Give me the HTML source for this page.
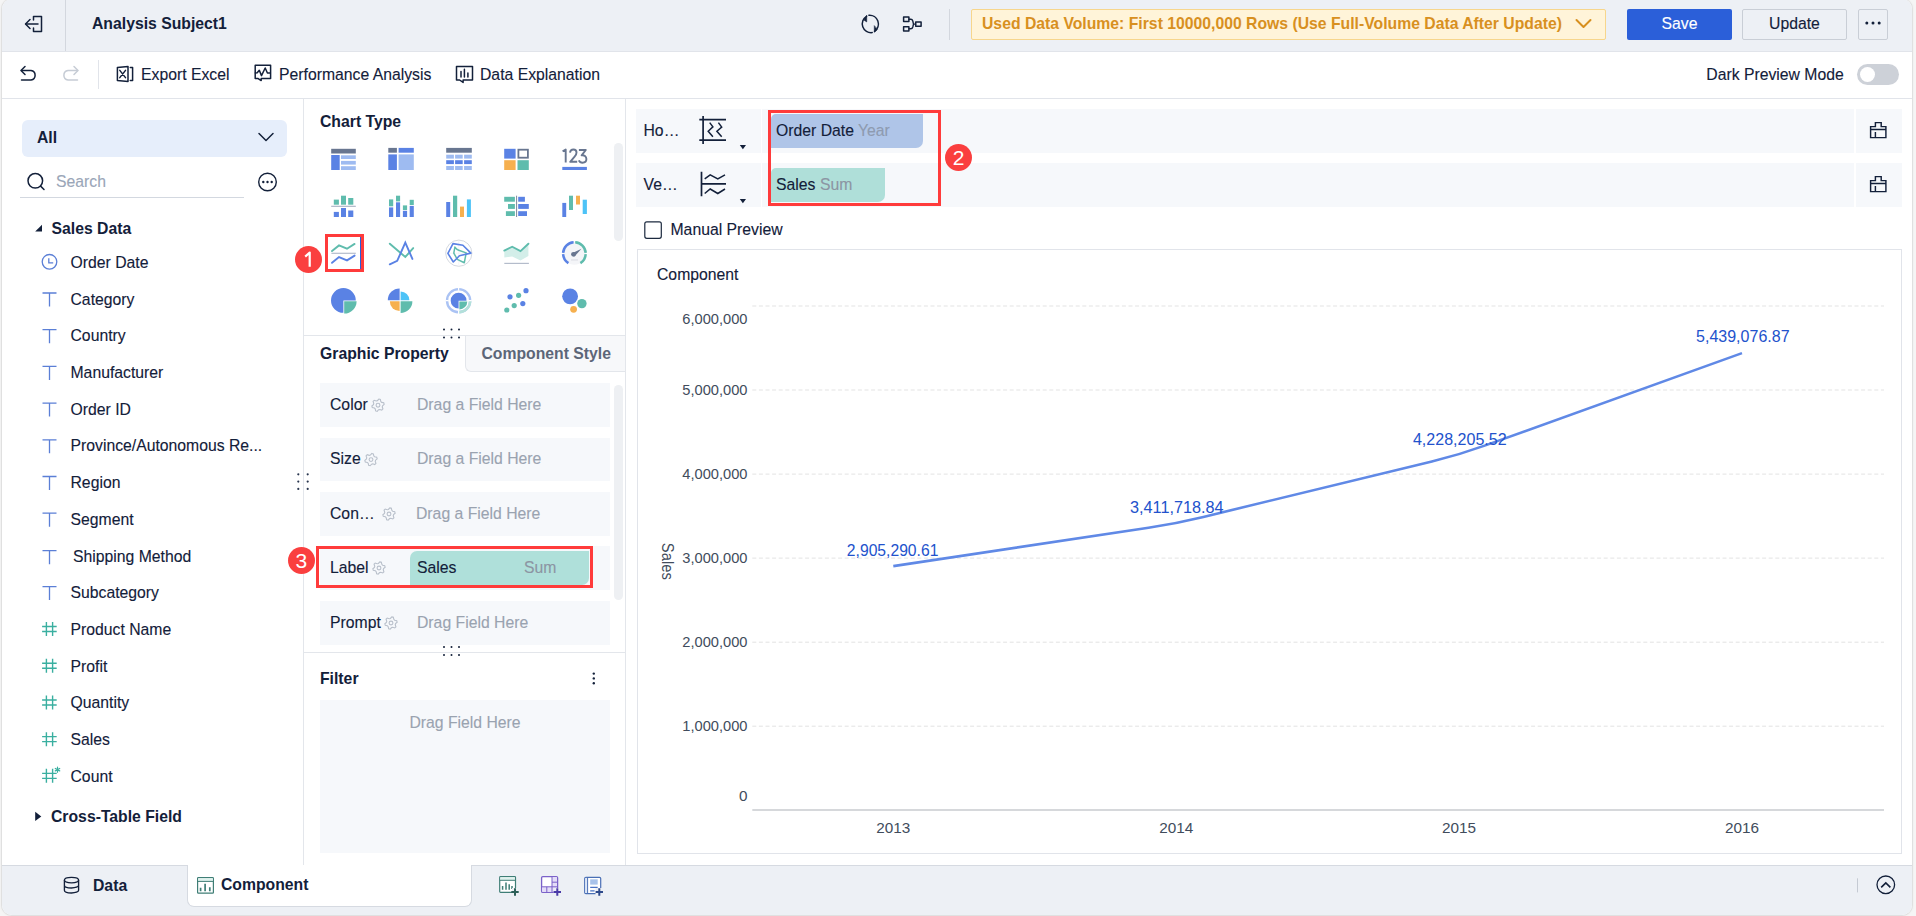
<!DOCTYPE html>
<html><head><meta charset="utf-8">
<style>
*{box-sizing:border-box;margin:0;padding:0}
html,body{width:1916px;height:916px;overflow:hidden;background:#f5f5f5;font-family:"Liberation Sans",sans-serif;color:#1c2a3f}
.a{position:absolute}
#frame{position:absolute;left:1px;top:-2px;width:1912px;height:918px;border:1px solid #e0e0e0;border-radius:11px;overflow:hidden;background:#fff;box-shadow:0 0 2px rgba(0,0,0,0.06)}
.t{position:absolute;font-size:15.75px;line-height:18px;white-space:nowrap;-webkit-text-stroke:0.12px currentColor}
.b{font-weight:bold;-webkit-text-stroke:0}
svg{position:absolute;overflow:visible}
.ic{fill:none;stroke:#13203a;stroke-width:1.5;stroke-linecap:round;stroke-linejoin:round}
</style></head><body>
<div id="frame"><div class="a" style="left:-2px;top:1px;width:1912px;height:916px">
<!-- ============ TOP BAR ============ -->
<div class="a" style="left:0;top:0;width:1912px;height:52px;background:#edf0f5;border-bottom:1px solid #e1e4ea"></div>
<div class="a" style="left:65px;top:0;width:1px;height:51px;background:#d3d7de"></div>
<svg style="left:0;top:0" width="66" height="51"><g class="ic" stroke-width="1.6"><path d="M26 24 H38"/><path d="M30 19.5 L25.5 24 L30 28.5"/><path d="M33.5 20 V16.5 H41.5 V31.5 H33.5 V28"/></g></svg>
<div class="t b" style="left:92px;top:15px;color:#13203a">Analysis Subject1</div>
<svg style="left:0;top:0" width="960" height="51"><g class="ic" stroke-width="1.6">
 <path d="M868.9 15.3 A8.8 8.8 0 0 1 874.6 31.3"/><path d="M872.2 32.6 A8.8 8.8 0 0 1 866.6 16.3"/>
 <path d="M866.7 15.6 L866.7 21.9 L863.9 20 Z" fill="#13203a" stroke-width="0.6"/><path d="M874.3 26 L874.3 32.3 L877.2 29.5 Z" fill="#13203a" stroke-width="0.6"/>
 <rect x="903.6" y="17.1" width="5.3" height="4.3" stroke-width="1.5"/><rect x="903.6" y="26.7" width="5.3" height="4.3" stroke-width="1.5"/><rect x="915.7" y="21.9" width="5.4" height="4.4" stroke-width="1.5"/>
 <path d="M909 19.3 H910.8 Q912.3 19.3 912.8 21 L913.5 24.1 L912.8 27 Q912.3 28.8 910.8 28.8 H909 M913.5 24.1 H915.7" stroke-width="1.4"/>
</g></svg>
<div class="a" style="left:949px;top:9px;width:1px;height:31px;background:#d3d7de"></div>
<div class="a" style="left:971px;top:9px;width:635px;height:31px;background:#fff4d9;border:1px solid #f7d68c;border-radius:2px"></div>
<div class="t b" style="left:982px;top:15px;color:#d8901f">Used Data Volume: First 10000,000 Rows (Use Full-Volume Data After Update)</div>
<svg style="left:0;top:0" width="1600" height="51"><path d="M1576.5 20 L1583.5 27 L1590.5 20" fill="none" stroke="#d8901f" stroke-width="2" stroke-linecap="round" stroke-linejoin="round"/></svg>
<div class="a" style="left:1627px;top:9px;width:105px;height:31px;background:#2b5fd9;border-radius:2px"></div>
<div class="t" style="left:1627px;top:15px;width:105px;text-align:center;color:#fff">Save</div>
<div class="a" style="left:1742px;top:9px;width:105px;height:31px;border:1px solid #c9ced6;border-radius:2px"></div>
<div class="t" style="left:1742px;top:15px;width:105px;text-align:center;color:#13203a">Update</div>
<div class="a" style="left:1858px;top:9px;width:30px;height:31px;border:1px solid #c9ced6;border-radius:2px"></div>
<svg style="left:0;top:0" width="1900" height="51"><g fill="#13203a"><circle cx="1866.8" cy="23" r="1.5"/><circle cx="1873" cy="23" r="1.5"/><circle cx="1879.2" cy="23" r="1.5"/></g></svg>

<!-- ============ TOOLBAR ============ -->
<div class="a" style="left:0;top:98px;width:1912px;height:1px;background:#e1e4ea"></div>
<svg style="left:0;top:52px" width="620" height="46"><g class="ic" stroke-width="1.6">
 <path d="M25 14.5 L21 18.5 L25 22.5"/><path d="M21.5 18.5 H31 A4.8 4.8 0 0 1 31 28 H21.5"/>
 <g stroke="#c6ccd5"><path d="M74 14.5 L78 18.5 L74 22.5"/><path d="M77.5 18.5 H68 A4.8 4.8 0 0 0 68 28 H77.5"/></g>
</g></svg>
<div class="a" style="left:98px;top:60px;width:1px;height:29px;background:#e1e4ea"></div>
<svg style="left:0;top:0" width="620" height="98"><g class="ic" stroke-width="1.3" stroke-linecap="butt" stroke-linejoin="miter">
 <path d="M117.4 67.4 L128 66.4 V81.6 L117.4 80.6 Z"/><path d="M119.8 70.4 L125.5 77.6 M125.5 70.4 L119.8 77.6"/><path d="M130.3 67.4 H132.6 V80.6 H130.3"/>
 <path d="M255.2 65.3 H270.6 V78.4 H261.2 V80.6 L257.8 78.4 H255.2 Z"/><path d="M255.4 73 L257.2 72.8 L259.3 70.3 L261.5 75.6 L265.2 68 L267.4 73 L270 73"/>
 <path d="M456.5 66.5 H472.5 V80 H463.1 V82.4 L459.6 80 H456.5 Z"/><path d="M461 71.5 V76.9 M464.4 69.2 V76.9 M467.9 73.1 V76.9" stroke-width="1.5"/>
</g></svg>
<div class="t" style="left:141px;top:66px;color:#13203a">Export Excel</div>
<div class="t" style="left:279px;top:66px;color:#13203a">Performance Analysis</div>
<div class="t" style="left:480px;top:66px;color:#13203a">Data Explanation</div>
<div class="t" style="left:1706.3px;top:66px;color:#13203a">Dark Preview Mode</div>
<div class="a" style="left:1857px;top:64px;width:42px;height:21px;border-radius:11px;background:#cdd1d8"></div>
<div class="a" style="left:1860px;top:67px;width:15px;height:15px;border-radius:50%;background:#fff"></div>
<!-- ============ LEFT PANEL ============ -->
<div class="a" style="left:303px;top:99px;width:1px;height:766px;background:#e3e6eb"></div>
<div class="a" style="left:22px;top:120px;width:265px;height:37px;background:#e6eefb;border-radius:6px"></div>
<div class="t b" style="left:37px;top:129px;color:#13203a">All</div>
<svg style="left:0;top:0" width="300" height="860"><path d="M259 133.5 L266 140.5 L273 133.5" fill="none" stroke="#13203a" stroke-width="1.5" stroke-linecap="round" stroke-linejoin="round"/>
<g class="ic" stroke-width="1.6"><circle cx="35.3" cy="180.8" r="7.3"/><path d="M40.6 186.1 L44 189.5"/><circle cx="267.5" cy="182" r="8.8" stroke-width="1.4"/></g>
<g fill="#13203a"><circle cx="263.3" cy="182" r="1.2"/><circle cx="267.5" cy="182" r="1.2"/><circle cx="271.7" cy="182" r="1.2"/></g>
<path d="M42 224.8 L42 231.6 L35.2 231.6 Z" fill="#13203a"/>
<path d="M35.2 811.8 L41.3 816.4 L35.2 821 Z" fill="#13203a"/>

<g fill="none" stroke="#5b7fd6" stroke-width="1.3"><circle cx="49.5" cy="261.8" r="7.3"/><path d="M48.8 258.3 V262.8 H53.2"/></g>
<g fill="none" stroke="#5b7fd6" stroke-width="1.3"><path d="M42.5 293.0 H56.5 M49.5 293.0 V306.5"/></g>
<g fill="none" stroke="#5b7fd6" stroke-width="1.3"><path d="M42.5 329.7 H56.5 M49.5 329.7 V343.2"/></g>
<g fill="none" stroke="#5b7fd6" stroke-width="1.3"><path d="M42.5 366.4 H56.5 M49.5 366.4 V379.9"/></g>
<g fill="none" stroke="#5b7fd6" stroke-width="1.3"><path d="M42.5 403.1 H56.5 M49.5 403.1 V416.6"/></g>
<g fill="none" stroke="#5b7fd6" stroke-width="1.3"><path d="M42.5 439.8 H56.5 M49.5 439.8 V453.3"/></g>
<g fill="none" stroke="#5b7fd6" stroke-width="1.3"><path d="M42.5 476.5 H56.5 M49.5 476.5 V490.0"/></g>
<g fill="none" stroke="#5b7fd6" stroke-width="1.3"><path d="M42.5 513.2 H56.5 M49.5 513.2 V526.7"/></g>
<g fill="none" stroke="#5b7fd6" stroke-width="1.3"><path d="M42.5 550.7 H56.5 M49.5 550.7 V564.2"/></g>
<g fill="none" stroke="#5b7fd6" stroke-width="1.3"><path d="M42.5 586.6 H56.5 M49.5 586.6 V600.1"/></g>
<g fill="none" stroke="#3aafa0" stroke-width="1.4"><path d="M42.1 626.55 H56.7 M42.1 631.55 H56.7 M46.4 622.05 V636.05 M52.6 622.05 V636.05"/></g>
<g fill="none" stroke="#3aafa0" stroke-width="1.4"><path d="M42.1 663.25 H56.7 M42.1 668.25 H56.7 M46.4 658.75 V672.75 M52.6 658.75 V672.75"/></g>
<g fill="none" stroke="#3aafa0" stroke-width="1.4"><path d="M42.1 699.95 H56.7 M42.1 704.95 H56.7 M46.4 695.45 V709.45 M52.6 695.45 V709.45"/></g>
<g fill="none" stroke="#3aafa0" stroke-width="1.4"><path d="M42.1 736.65 H56.7 M42.1 741.65 H56.7 M46.4 732.15 V746.15 M52.6 732.15 V746.15"/></g>
<g fill="none" stroke="#3aafa0" stroke-width="1.4"><path d="M42.1 773.35 H56.7 M42.1 778.35 H56.7 M46.4 768.85 V782.85 M52.6 768.85 V782.85"/></g>
<g stroke="#3aafa0" stroke-width="1.2" stroke-linecap="round"><path d="M57.5 767.15 V772.15 M55.3 768.45 L59.7 770.85 M59.7 768.45 L55.3 770.85"/></g>
</svg>
<div class="t" style="left:56px;top:173px;color:#9aa6b8">Search</div>
<div class="a" style="left:20px;top:197px;width:224px;height:1px;background:#d3d8e0"></div>
<div class="t b" style="left:51.5px;top:220px;color:#13203a">Sales Data</div>
<div class="t" style="left:70.5px;top:253.80px;color:#13203a">Order Date</div>
<div class="t" style="left:70.5px;top:290.50px;color:#13203a">Category</div>
<div class="t" style="left:70.5px;top:327.20px;color:#13203a">Country</div>
<div class="t" style="left:70.5px;top:363.90px;color:#13203a">Manufacturer</div>
<div class="t" style="left:70.5px;top:400.60px;color:#13203a">Order ID</div>
<div class="t" style="left:70.5px;top:437.30px;color:#13203a">Province/Autonomous Re...</div>
<div class="t" style="left:70.5px;top:474.00px;color:#13203a">Region</div>
<div class="t" style="left:70.5px;top:510.70px;color:#13203a">Segment</div>
<div class="t" style="left:73px;top:548.20px;color:#13203a">Shipping Method</div>
<div class="t" style="left:70.5px;top:584.10px;color:#13203a">Subcategory</div>
<div class="t" style="left:70.5px;top:620.80px;color:#13203a">Product Name</div>
<div class="t" style="left:70.5px;top:657.50px;color:#13203a">Profit</div>
<div class="t" style="left:70.5px;top:694.20px;color:#13203a">Quantity</div>
<div class="t" style="left:70.5px;top:730.90px;color:#13203a">Sales</div>
<div class="t" style="left:70.5px;top:767.60px;color:#13203a">Count</div>
<div class="t b" style="left:51px;top:807.7px;color:#13203a">Cross-Table Field</div>
<svg style="left:0;top:0" width="310" height="500"><g fill="#2a3750"><circle cx="298.3" cy="474.3" r="1.1"/><circle cx="298.3" cy="481.6" r="1.1"/><circle cx="298.3" cy="488.9" r="1.1"/><circle cx="307.7" cy="474.3" r="1.1"/><circle cx="307.7" cy="481.6" r="1.1"/><circle cx="307.7" cy="488.9" r="1.1"/></g></svg>
<!-- ============ RIGHT PANEL ============ -->
<div class="a" style="left:636px;top:109.3px;width:1218px;height:43.3px;background:#f6f8fb"></div>
<div class="a" style="left:1855.5px;top:109.3px;width:46.5px;height:43.3px;background:#f6f8fb"></div>
<div class="a" style="left:760.5px;top:109.3px;width:1px;height:43.3px;background:#fff"></div>
<div class="a" style="left:636px;top:163.3px;width:1218px;height:43.3px;background:#f6f8fb"></div>
<div class="a" style="left:1855.5px;top:163.3px;width:46.5px;height:43.3px;background:#f6f8fb"></div>
<div class="a" style="left:760.5px;top:163.3px;width:1px;height:43.3px;background:#fff"></div>
<div class="t" style="left:643.5px;top:121.5px;color:#13203a">Ho…</div>
<div class="t" style="left:643.5px;top:175.5px;color:#13203a">Ve…</div>
<svg style="left:0;top:0" width="1916" height="260"><g fill="none" stroke="#13203a" stroke-width="1.7" stroke-linecap="butt"><path d="M703.1 116 V144 M699.3 119.6 H726 M699.3 140.2 H726"/><path d="M709.7 122.6 L712.9 126.9 L708.2 131.3 L712.9 136.8 M718.4 122.6 L721.7 127.1 L716.9 131.3 L721.7 136.8" stroke-width="1.5" stroke-linejoin="miter"/><path d="M701.5 171.7 V196.3 M701.5 183.9 H726" /><path d="M704.7 178.8 L710.2 174.8 L717.8 178.8 L725 174.8 M704.7 193.5 L710.2 189 L717.8 193.5 L725 189" stroke-width="1.5"/></g><path d="M739.8 145 H746 L742.9 149.2 Z M739.8 199 H746 L742.9 203.2 Z" fill="#13203a"/><g transform="translate(0,0)" fill="none" stroke="#13203a" stroke-width="1.45" stroke-linejoin="miter"><path d="M1870.6 126.6 H1875.4 V122.6 H1881.2 V126.6 H1885.9 V137.6 H1870.6 Z M1870.6 129.5 H1885.9 M1875.4 132 V137.6"/></g><g transform="translate(0,54)" fill="none" stroke="#13203a" stroke-width="1.45" stroke-linejoin="miter"><path d="M1870.6 126.6 H1875.4 V122.6 H1881.2 V126.6 H1885.9 V137.6 H1870.6 Z M1870.6 129.5 H1885.9 M1875.4 132 V137.6"/></g><rect x="644.8" y="221.8" width="16.5" height="16.5" rx="2" fill="#fff" stroke="#1c2a3f" stroke-width="1.2"/></svg>
<div class="a" style="left:770.5px;top:114.2px;width:152.5px;height:33.8px;background:#afc5e8;border-radius:5px 0 7px 0"></div>
<div class="t" style="left:776px;top:121.5px;color:#13203a">Order Date</div>
<div class="t" style="left:858px;top:121.5px;color:#8e9bb0">Year</div>
<div class="a" style="left:770.5px;top:168px;width:114.5px;height:33.8px;background:#afdfd9;border-radius:5px 0 7px 0"></div>
<div class="t" style="left:776px;top:175.5px;color:#13203a">Sales</div>
<div class="t" style="left:820px;top:175.5px;color:#8c95a3">Sum</div>
<div class="a" style="left:768px;top:110.2px;width:173px;height:95.6px;border:3.1px solid #ff3b3b"></div>
<div class="t" style="left:670.5px;top:220.5px;color:#13203a">Manual Preview</div>
<div class="a" style="left:636.5px;top:249px;width:1265.5px;height:604.5px;border:1px solid #e1e4ea"></div>
<div class="t" style="left:657px;top:266px;color:#13203a">Component</div>
<svg style="left:0;top:0" width="1916" height="860"><path d="M752.3 726.2 H1884" stroke="#e3e3e3" stroke-width="1" stroke-dasharray="4 2.6"/><path d="M752.3 642.2 H1884" stroke="#e3e3e3" stroke-width="1" stroke-dasharray="4 2.6"/><path d="M752.3 558.1 H1884" stroke="#e3e3e3" stroke-width="1" stroke-dasharray="4 2.6"/><path d="M752.3 474.1 H1884" stroke="#e3e3e3" stroke-width="1" stroke-dasharray="4 2.6"/><path d="M752.3 390.0 H1884" stroke="#e3e3e3" stroke-width="1" stroke-dasharray="4 2.6"/><path d="M752.3 306.0 H1884" stroke="#e3e3e3" stroke-width="1" stroke-dasharray="4 2.6"/><path d="M752.3 810 H1884" stroke="#c9cbcf" stroke-width="1.3"/><text x="747.5" y="800.7" text-anchor="end" font-family="Liberation Sans" font-size="15.3" fill="#414c5c">0</text><text x="747.5" y="731.4" text-anchor="end" font-family="Liberation Sans" font-size="15.3" fill="#414c5c" textLength="65.2" lengthAdjust="spacingAndGlyphs">1,000,000</text><text x="747.5" y="647.4" text-anchor="end" font-family="Liberation Sans" font-size="15.3" fill="#414c5c" textLength="65.2" lengthAdjust="spacingAndGlyphs">2,000,000</text><text x="747.5" y="563.3" text-anchor="end" font-family="Liberation Sans" font-size="15.3" fill="#414c5c" textLength="65.2" lengthAdjust="spacingAndGlyphs">3,000,000</text><text x="747.5" y="479.3" text-anchor="end" font-family="Liberation Sans" font-size="15.3" fill="#414c5c" textLength="65.2" lengthAdjust="spacingAndGlyphs">4,000,000</text><text x="747.5" y="395.2" text-anchor="end" font-family="Liberation Sans" font-size="15.3" fill="#414c5c" textLength="65.2" lengthAdjust="spacingAndGlyphs">5,000,000</text><text x="747.5" y="323.7" text-anchor="end" font-family="Liberation Sans" font-size="15.3" fill="#414c5c" textLength="65.2" lengthAdjust="spacingAndGlyphs">6,000,000</text><text x="893.3" y="833.2" text-anchor="middle" font-family="Liberation Sans" font-size="15.3" fill="#414c5c">2013</text><text x="1176.2" y="833.2" text-anchor="middle" font-family="Liberation Sans" font-size="15.3" fill="#414c5c">2014</text><text x="1459.1" y="833.2" text-anchor="middle" font-family="Liberation Sans" font-size="15.3" fill="#414c5c">2015</text><text x="1742.0" y="833.2" text-anchor="middle" font-family="Liberation Sans" font-size="15.3" fill="#414c5c">2016</text><text transform="translate(662.2,561.3) rotate(90)" text-anchor="middle" font-family="Liberation Sans" font-size="17" fill="#414c5c" textLength="37" lengthAdjust="spacingAndGlyphs">Sales</text><path d="M893.3 566.1 L1148.5 527.7 Q1176.2 523.5 1203.4 516.9 L1431.9 461.5 Q1459.1 454.9 1485.4 445.4 L1742 353.1" fill="none" stroke="#6089e6" stroke-width="2.6" stroke-linecap="butt"/><text x="892.6" y="556.4" text-anchor="middle" font-family="Liberation Sans" font-size="16.6" fill="#2252cc" textLength="91.5" lengthAdjust="spacingAndGlyphs">2,905,290.61</text><text x="1176.8" y="513.4" text-anchor="middle" font-family="Liberation Sans" font-size="16.6" fill="#2252cc" textLength="93.5" lengthAdjust="spacingAndGlyphs">3,411,718.84</text><text x="1459.8" y="445.2" text-anchor="middle" font-family="Liberation Sans" font-size="16.6" fill="#2252cc" textLength="93.7" lengthAdjust="spacingAndGlyphs">4,228,205.52</text><text x="1742.8" y="342.4" text-anchor="middle" font-family="Liberation Sans" font-size="16.6" fill="#2252cc" textLength="93.5" lengthAdjust="spacingAndGlyphs">5,439,076.87</text></svg>
<!-- ============ BOTTOM BAR ============ -->
<div class="a" style="left:0;top:865px;width:1912px;height:52px;background:#edf0f5;border-top:1px solid #d6dae1"></div>
<div class="a" style="left:186.5px;top:865px;width:285px;height:41.5px;background:#fff;border:1px solid #d6dae1;border-top:none;border-radius:0 0 7px 7px"></div>
<div class="t b" style="left:93px;top:876.5px;color:#13203a">Data</div>
<div class="t b" style="left:221px;top:876px;color:#13203a">Component</div>
<svg style="left:0;top:0" width="1916" height="916"><g fill="none" stroke="#13203a" stroke-width="1.35"><ellipse cx="71.5" cy="880.1" rx="7.1" ry="2.7"/><path d="M64.4 880.1 V890.3 A7.1 2.7 0 0 0 78.6 890.3 V880.1 M64.4 885.3 A7.1 2.7 0 0 0 78.6 885.3"/></g><rect x="197.6" y="877.6" width="15.8" height="15.6" rx="0.8" fill="#fff" stroke="#3f7e76" stroke-width="1.2"/><rect x="198.2" y="878.2" width="14.6" height="3" fill="#dff2ee"/><path d="M197.6 881.4 H213.4" stroke="#3f7e76" stroke-width="1"/><path d="M200.6 887.8 V891.3 M205.1 883.8 V891.3 M209.8 887.3 V891.3" stroke="#3f7e76" stroke-width="1.7"/><rect x="499.7" y="876.6" width="15.8" height="15.8" rx="0.8" fill="#fff" stroke="#3f7e76" stroke-width="1.2"/><rect x="500.3" y="877.2" width="14.6" height="2.8" fill="#dff2ee"/><path d="M499.7 880.3 H515.5" stroke="#3f7e76" stroke-width="1"/><path d="M502.6 886 V889.8 M506 882.6 V889.8 M509.2 884.3 V889.8 M512 886 V889" stroke="#3f7e76" stroke-width="1.5"/><rect x="512" y="888" width="8" height="8" fill="#edf0f5"/><path d="M515 888.3 V895.7 M511.3 892 H518.7" stroke="#2d5f58" stroke-width="2"/><rect x="541.6" y="876.6" width="16" height="15.8" rx="1.2" fill="#fff" stroke="#7b62c9" stroke-width="1.3"/><rect x="552" y="877.2" width="5" height="9.6" fill="#e4ddf8"/><rect x="542.2" y="886.8" width="14.8" height="5" fill="#e4ddf8"/><path d="M552 876.6 V892.4 M541.6 886.8 H557.6 M552 882.2 H557.6 M546.8 886.8 V892.4" stroke="#7b62c9" stroke-width="1"/><rect x="553.5" y="888" width="8" height="8" fill="#edf0f5"/><path d="M557.3 888.3 V895.7 M553.6 892 H561" stroke="#4a3aa7" stroke-width="2"/><rect x="584.7" y="877.3" width="16" height="16.3" rx="1.2" fill="#fff" stroke="#4a6fb5" stroke-width="1.2"/><rect x="585.3" y="877.9" width="2.2" height="15.1" fill="#dbe6f7"/><path d="M587.6 877.3 V893.6" stroke="#4a6fb5" stroke-width="1"/><rect x="590.2" y="879.3" width="7.5" height="5.3" fill="#a9c3ea"/><path d="M590.2 887.4 H597.7 M590.2 890.9 H594.6" stroke="#4a73c4" stroke-width="1.2"/><rect x="595.5" y="888" width="8" height="8" fill="#edf0f5"/><path d="M599.3 888.3 V895.7 M595.6 892 H603" stroke="#2e4a8b" stroke-width="2"/><path d="M1857.5 878.3 V892.4" stroke="#c5cad3" stroke-width="1"/><g fill="none" stroke="#13203a" stroke-width="1.3"><circle cx="1885.8" cy="884.8" r="8.8"/><path d="M1881.2 887.4 L1885.8 882.9 L1890.4 887.4" stroke-width="1.6"/></g></svg>
<!-- ============ MIDDLE PANEL ============ -->
<div class="a" style="left:625px;top:99px;width:1px;height:766px;background:#e3e6eb"></div>
<div class="t b" style="left:320px;top:113px;color:#13203a">Chart Type</div>
<div class="a" style="left:614px;top:143px;width:9px;height:98px;background:#eef0f3;border-radius:5px"></div>
<div class="a" style="left:325px;top:234px;width:39px;height:38px;border:3px solid #ff3b3b"></div>
<div class="a" style="left:360px;top:237px;width:1px;height:32px;background:#2b5fd9"></div>
<svg style="left:0;top:0" width="620" height="330"><rect x="331.2" y="148.8" width="24.60" height="4.70" fill="#687690"/>
<rect x="331.2" y="155" width="8.50" height="15.00" fill="#5a82e4"/>
<rect x="341" y="155.3" width="14.80" height="3.70" fill="#9ebbf1"/>
<rect x="341" y="160.9" width="14.80" height="3.70" fill="#9ebbf1"/>
<rect x="341" y="166.2" width="14.80" height="3.80" fill="#9ebbf1"/>
<rect x="388.3" y="147.9" width="8.60" height="4.80" fill="#687690"/>
<rect x="398.6" y="147.9" width="15.20" height="4.80" fill="#5a82e4"/>
<rect x="388.3" y="154.4" width="8.60" height="15.60" fill="#5a82e4"/>
<rect x="398.6" y="154.4" width="15.20" height="15.60" fill="#9ebbf1"/>
<rect x="446.2" y="147.9" width="25.60" height="4.80" fill="#687690"/>
<rect x="446.2" y="154.7" width="7.70" height="3.90" fill="#9ebbf1"/>
<rect x="455.1" y="154.7" width="7.60" height="3.90" fill="#9ebbf1"/>
<rect x="464.1" y="154.7" width="7.70" height="3.90" fill="#9ebbf1"/>
<rect x="446.2" y="160.2" width="7.70" height="3.90" fill="#5a82e4"/>
<rect x="455.1" y="160.2" width="7.60" height="3.90" fill="#5a82e4"/>
<rect x="464.1" y="160.2" width="7.70" height="3.90" fill="#5a82e4"/>
<rect x="446.2" y="166" width="7.70" height="4.00" fill="#9ebbf1"/>
<rect x="455.1" y="166" width="7.60" height="4.00" fill="#9ebbf1"/>
<rect x="464.1" y="166" width="7.70" height="4.00" fill="#9ebbf1"/>
<rect x="504.2" y="148.8" width="11.40" height="9.80" fill="#5a82e4"/>
<rect x="518.4" y="149.7" width="9.5" height="8" fill="none" stroke="#687690" stroke-width="1.8"/>
<rect x="504.2" y="160.2" width="11.40" height="9.80" fill="#f6b04f"/>
<rect x="517.5" y="160.2" width="11.30" height="9.80" fill="#5fbcad"/>
<path d="M562.6 151.4 L565.7 149.6 V162.6 M570 152.7 Q570.4 149.5 573.4 149.5 Q576.5 149.5 576.5 152.5 Q576.5 154.6 574.6 156.7 L570.2 161.8 H577.2 M578.9 150 H585.8 L581.6 155.3 Q583.6 155 585 156 Q586.4 157.1 586.4 159 Q586.4 162.7 582.5 162.7 Q579.9 162.7 578.8 160.4" fill="none" stroke="#687690" stroke-width="1.9" stroke-linejoin="round"/>
<rect x="562.3" y="166.9" width="24.60" height="3.10" fill="#5a82e4"/>
<rect x="331.2" y="205.7" width="24.60" height="1.30" fill="#b4bccb"/>
<rect x="333.8" y="199.6" width="5.10" height="5.10" fill="#5fbcad"/>
<rect x="341" y="195.7" width="5.00" height="9.00" fill="#5fbcad"/>
<rect x="348.2" y="198" width="5.10" height="6.70" fill="#5fbcad"/>
<rect x="333.8" y="211.9" width="5.10" height="5.10" fill="#5a82e4"/>
<rect x="341" y="208" width="5.00" height="9.00" fill="#5a82e4"/>
<rect x="348.2" y="210.5" width="5.10" height="6.50" fill="#5a82e4"/>
<rect x="389" y="199.4" width="4.20" height="6.90" fill="#5fbcad"/>
<rect x="389" y="207.4" width="4.20" height="9.60" fill="#5a82e4"/>
<rect x="396" y="195.7" width="4.10" height="5.70" fill="#5fbcad"/>
<rect x="396" y="202.3" width="4.10" height="14.70" fill="#5a82e4"/>
<rect x="402.9" y="205.4" width="4.20" height="4.60" fill="#5fbcad"/>
<rect x="402.9" y="210.8" width="4.20" height="6.20" fill="#5a82e4"/>
<rect x="409.7" y="199.8" width="4.10" height="5.20" fill="#5fbcad"/>
<rect x="409.7" y="205.9" width="4.10" height="11.10" fill="#5a82e4"/>
<rect x="446.2" y="202" width="4.00" height="15.00" fill="#5a82e4"/>
<rect x="453" y="195.7" width="4.20" height="21.30" fill="#5fbcad"/>
<rect x="460" y="206.6" width="4.00" height="10.40" fill="#f6b04f"/>
<rect x="466.9" y="199.4" width="4.00" height="17.60" fill="#4dc3f7"/>
<rect x="516" y="195.7" width="1.10" height="21.30" fill="#8a93a3"/>
<rect x="504.2" y="196.8" width="10.70" height="4.90" fill="#5fbcad"/>
<rect x="508" y="204" width="6.90" height="4.90" fill="#5fbcad"/>
<rect x="505.9" y="211.2" width="9.00" height="4.80" fill="#5fbcad"/>
<rect x="518.2" y="196.8" width="6.70" height="4.90" fill="#5a82e4"/>
<rect x="518.2" y="204" width="10.60" height="4.90" fill="#5a82e4"/>
<rect x="518.2" y="211.2" width="8.80" height="4.80" fill="#5a82e4"/>
<rect x="562.3" y="202.9" width="3.90" height="14.10" fill="#5a82e4"/>
<rect x="569" y="195.7" width="4.00" height="14.30" fill="#5fbcad"/>
<rect x="576" y="195.7" width="4.00" height="8.80" fill="#f6b04f"/>
<rect x="582.7" y="199.7" width="4.20" height="14.30" fill="#4dc3f7"/>
<polyline points="332,251.1 339,245.4 347,248.7 354.6,243.9" fill="none" stroke="#5fbcad" stroke-width="1.9" stroke-linecap="round" stroke-linejoin="miter"/>
<rect x="331.4" y="252.7" width="24.40" height="1.20" fill="#b4bccb"/>
<polyline points="332,262.8 339,257.1 347,260.4 354.6,255.6" fill="none" stroke="#5a82e4" stroke-width="1.9" stroke-linecap="round" stroke-linejoin="miter"/>
<polyline points="389.8,243.7 405.3,257 413.2,248.1" fill="none" stroke="#5fbcad" stroke-width="1.9" stroke-linecap="round"/>
<polyline points="389.8,264.3 397.2,260.9 405.3,242.7 412.4,258.9" fill="none" stroke="#5a82e4" stroke-width="1.9" stroke-linecap="round"/>
<circle cx="458.8" cy="253.2" r="13.1" fill="none" stroke="#d5d9e0" stroke-width="1"/>
<path d="M458.8 241 V265 M446.6 253.2 H471" stroke="#eceef2" stroke-width="0.6"/>
<path d="M454.9 247.1 Q456.5 249.5 458.7 250.3 L466.2 252.9 L464.3 262.7 L457.3 259.4 L453.8 253.1 Z" fill="none" stroke="#5fbcad" stroke-width="1.5" stroke-linejoin="round"/>
<polygon points="453,243.6 462.9,245.2 470.9,253.1 459.4,255.7 453.3,262 447.9,253.4" fill="none" stroke="#5a82e4" stroke-width="1.6" stroke-linejoin="round"/>
<polygon points="504.3,250.6 512.2,246.7 520.5,251.1 528.4,243.7 528.4,256 520.5,260.4 512.2,256.5 504.3,257.5" fill="#d3eee9"/>
<polyline points="504.3,250.6 512.2,246.7 520.5,251.1 528.4,243.7" fill="none" stroke="#5fbcad" stroke-width="1.9" stroke-linecap="round"/>
<rect x="504.3" y="262.8" width="24.60" height="1.20" fill="#b4bccb"/>
<circle cx="574.4" cy="253.5" r="11.3" fill="#f4f5f8"/>
<path d="M568.41 263.08 A11.3 11.3 0 0 1 563.12 254.09" fill="none" stroke="#5a82e4" stroke-width="2.5"/>
<path d="M563.12 252.91 A11.3 11.3 0 0 1 573.61 242.23" fill="none" stroke="#5a82e4" stroke-width="2.5"/>
<path d="M575.19 242.23 A11.3 11.3 0 0 1 585.68 252.91" fill="none" stroke="#5fbcad" stroke-width="2.5"/>
<path d="M585.68 254.09 A11.3 11.3 0 0 1 580.39 263.08" fill="none" stroke="#5fbcad" stroke-width="2.5"/>
<path d="M571.5 253.5 L581.5 248.8 L574.5 256.5 Z" fill="#687690"/><circle cx="573.5" cy="254.3" r="2.4" fill="#687690"/>
<rect x="571" y="259.3" width="7.00" height="1.30" fill="#dfe2e8"/>
<path d="M343.4 300.4 L343.4 312.79999999999995 A12.4 12.4 0 1 1 355.79999999999995 300.4 Z" fill="#5a82e4"/>
<path d="M344.2 301.2 L356.60 301.20 A12.4 12.4 0 0 1 344.20 313.60 Z" fill="#5fbcad"/>
<path d="M399.6 300.2 L387.80 300.20 A11.8 11.8 0 0 1 399.60 288.40 Z" fill="#5a82e4"/>
<path d="M400.6 300.2 L400.60 291.40 A8.8 8.8 0 0 1 409.40 300.20 Z" fill="#4dc3f7"/>
<path d="M399.6 301.2 L399.60 311.00 A9.8 9.8 0 0 1 389.80 301.20 Z" fill="#f6b04f"/>
<path d="M400.6 301.2 L412.40 301.20 A11.8 11.8 0 0 1 400.60 313.00 Z" fill="#5fbcad"/>
<circle cx="458.6" cy="300.7" r="11.6" fill="none" stroke="#abc3f4" stroke-width="2.4"/>
<path d="M470.20000000000005 300.7 A11.6 11.6 0 0 1 458.6 312.3" fill="none" stroke="#b3e1d9" stroke-width="2.4"/>
<path d="M458.6 287.5 V290.5 M458.6 311 V314 M445.5 300.7 H448.5 M468.8 300.7 H471.8" stroke="#fff" stroke-width="1.2"/>
<path d="M458.6 300.7 L458.6 308.59999999999997 A7.9 7.9 0 1 1 466.5 300.7 Z" fill="#5a82e4"/>
<path d="M459.40000000000003 301.5 L467.30 301.50 A7.9 7.9 0 0 1 459.40 309.40 Z" fill="#5fbcad"/>
<circle cx="506.8" cy="310" r="2.6" fill="#5fbcad"/>
<circle cx="514.2" cy="305.6" r="2.6" fill="#5fbcad"/>
<circle cx="522.8" cy="303.6" r="2.6" fill="#5a82e4"/>
<circle cx="510" cy="296.8" r="2.6" fill="#5a82e4"/>
<circle cx="518.6" cy="295.3" r="2.6" fill="#5fbcad"/>
<circle cx="526" cy="290.7" r="2.6" fill="#5a82e4"/>
<circle cx="570.1" cy="296.3" r="7.9" fill="#5a82e4"/><circle cx="581.9" cy="303.6" r="4.7" fill="#5fbcad"/><circle cx="573.6" cy="309.3" r="3.4" fill="#f6b04f"/></svg>
<div class="a" style="left:304px;top:335px;width:321px;height:1px;background:#e3e6eb"></div>
<svg style="left:0;top:0" width="620" height="700"><circle cx="444.0" cy="329.5" r="1" fill="#13203a"/><circle cx="444.0" cy="337.5" r="1" fill="#13203a"/><circle cx="451.5" cy="329.5" r="1" fill="#13203a"/><circle cx="451.5" cy="337.5" r="1" fill="#13203a"/><circle cx="459.0" cy="329.5" r="1" fill="#13203a"/><circle cx="459.0" cy="337.5" r="1" fill="#13203a"/><circle cx="444.0" cy="647" r="1" fill="#13203a"/><circle cx="444.0" cy="655" r="1" fill="#13203a"/><circle cx="451.5" cy="647" r="1" fill="#13203a"/><circle cx="451.5" cy="655" r="1" fill="#13203a"/><circle cx="459.0" cy="647" r="1" fill="#13203a"/><circle cx="459.0" cy="655" r="1" fill="#13203a"/></svg>
<div class="a" style="left:465px;top:336px;width:160px;height:36px;background:#f7f8fa;border-left:1px solid #e3e6eb;border-bottom:1px solid #e3e6eb;border-bottom-left-radius:6px"></div>
<div class="t b" style="left:320px;top:345px;color:#13203a">Graphic Property</div>
<div class="t b" style="left:481.5px;top:345px;color:#5c6678">Component Style</div>
<div class="a" style="left:320px;top:383.2px;width:290px;height:43.6px;background:#f6f8fb"></div>
<div class="t" style="left:330px;top:395.7px;color:#13203a">Color</div>
<div class="t" style="left:417px;top:395.7px;color:#9aa3b0">Drag a Field Here</div>
<div class="a" style="left:320px;top:437.6px;width:290px;height:43.6px;background:#f6f8fb"></div>
<div class="t" style="left:330px;top:450.1px;color:#13203a">Size</div>
<div class="t" style="left:417px;top:450.1px;color:#9aa3b0">Drag a Field Here</div>
<div class="a" style="left:320px;top:492px;width:290px;height:43.6px;background:#f6f8fb"></div>
<div class="t" style="left:330px;top:504.5px;color:#13203a">Con…</div>
<div class="t" style="left:416px;top:504.5px;color:#9aa3b0">Drag a Field Here</div>
<div class="a" style="left:320px;top:546px;width:290px;height:43.6px;background:#f6f8fb"></div>
<div class="t" style="left:330px;top:558.5px;color:#13203a">Label</div>
<div class="a" style="left:320px;top:601px;width:290px;height:43.6px;background:#f6f8fb"></div>
<div class="t" style="left:330px;top:613.5px;color:#13203a">Prompt</div>
<div class="t" style="left:417px;top:613.5px;color:#9aa3b0">Drag Field Here</div>
<div class="a" style="left:410px;top:551px;width:179px;height:34px;background:#afe0da;border-radius:7px 0 7px 0"></div>
<div class="t" style="left:417px;top:558.5px;color:#13203a">Sales</div>
<div class="t" style="left:524px;top:558.5px;color:#8c95a3">Sum</div>
<svg style="left:0;top:0" width="620" height="700"><g transform="translate(378,405.2)"><path d="M0.81 -6.15 L2.37 -5.73 L2.80 -3.65 L3.65 -2.80 L5.73 -2.37 L6.15 -0.81 L4.56 0.60 L4.25 1.76 L4.92 3.77 L3.77 4.92 L1.76 4.25 L0.60 4.56 L-0.81 6.15 L-2.37 5.73 L-2.80 3.65 L-3.65 2.80 L-5.73 2.37 L-6.15 0.81 L-4.56 -0.60 L-4.25 -1.76 L-4.92 -3.77 L-3.77 -4.92 L-1.76 -4.25 L-0.60 -4.56 Z" fill="none" stroke="#b9c0cb" stroke-width="1.1"/><circle r="1.9" fill="none" stroke="#b9c0cb" stroke-width="1.1"/></g><g transform="translate(371,459.6)"><path d="M0.81 -6.15 L2.37 -5.73 L2.80 -3.65 L3.65 -2.80 L5.73 -2.37 L6.15 -0.81 L4.56 0.60 L4.25 1.76 L4.92 3.77 L3.77 4.92 L1.76 4.25 L0.60 4.56 L-0.81 6.15 L-2.37 5.73 L-2.80 3.65 L-3.65 2.80 L-5.73 2.37 L-6.15 0.81 L-4.56 -0.60 L-4.25 -1.76 L-4.92 -3.77 L-3.77 -4.92 L-1.76 -4.25 L-0.60 -4.56 Z" fill="none" stroke="#b9c0cb" stroke-width="1.1"/><circle r="1.9" fill="none" stroke="#b9c0cb" stroke-width="1.1"/></g><g transform="translate(389,514)"><path d="M0.81 -6.15 L2.37 -5.73 L2.80 -3.65 L3.65 -2.80 L5.73 -2.37 L6.15 -0.81 L4.56 0.60 L4.25 1.76 L4.92 3.77 L3.77 4.92 L1.76 4.25 L0.60 4.56 L-0.81 6.15 L-2.37 5.73 L-2.80 3.65 L-3.65 2.80 L-5.73 2.37 L-6.15 0.81 L-4.56 -0.60 L-4.25 -1.76 L-4.92 -3.77 L-3.77 -4.92 L-1.76 -4.25 L-0.60 -4.56 Z" fill="none" stroke="#b9c0cb" stroke-width="1.1"/><circle r="1.9" fill="none" stroke="#b9c0cb" stroke-width="1.1"/></g><g transform="translate(379,568)"><path d="M0.81 -6.15 L2.37 -5.73 L2.80 -3.65 L3.65 -2.80 L5.73 -2.37 L6.15 -0.81 L4.56 0.60 L4.25 1.76 L4.92 3.77 L3.77 4.92 L1.76 4.25 L0.60 4.56 L-0.81 6.15 L-2.37 5.73 L-2.80 3.65 L-3.65 2.80 L-5.73 2.37 L-6.15 0.81 L-4.56 -0.60 L-4.25 -1.76 L-4.92 -3.77 L-3.77 -4.92 L-1.76 -4.25 L-0.60 -4.56 Z" fill="none" stroke="#b9c0cb" stroke-width="1.1"/><circle r="1.9" fill="none" stroke="#b9c0cb" stroke-width="1.1"/></g><g transform="translate(391,623)"><path d="M0.81 -6.15 L2.37 -5.73 L2.80 -3.65 L3.65 -2.80 L5.73 -2.37 L6.15 -0.81 L4.56 0.60 L4.25 1.76 L4.92 3.77 L3.77 4.92 L1.76 4.25 L0.60 4.56 L-0.81 6.15 L-2.37 5.73 L-2.80 3.65 L-3.65 2.80 L-5.73 2.37 L-6.15 0.81 L-4.56 -0.60 L-4.25 -1.76 L-4.92 -3.77 L-3.77 -4.92 L-1.76 -4.25 L-0.60 -4.56 Z" fill="none" stroke="#b9c0cb" stroke-width="1.1"/><circle r="1.9" fill="none" stroke="#b9c0cb" stroke-width="1.1"/></g></svg>
<div class="a" style="left:316px;top:546px;width:277px;height:42px;border:3.1px solid #ff3b3b"></div>
<div class="a" style="left:614px;top:385px;width:9px;height:215px;background:#eef0f3;border-radius:5px"></div>
<div class="a" style="left:304px;top:652px;width:321px;height:1px;background:#e3e6eb"></div>
<div class="t b" style="left:320px;top:669.5px;color:#13203a">Filter</div>
<svg style="left:0;top:0" width="620" height="700"><g fill="#13203a"><circle cx="593.8" cy="673.6" r="1.2"/><circle cx="593.8" cy="678.4" r="1.2"/><circle cx="593.8" cy="683.2" r="1.2"/></g></svg>
<div class="a" style="left:320px;top:700px;width:290px;height:153px;background:#f6f8fb"></div>
<div class="t" style="left:320px;top:713.5px;width:290px;text-align:center;color:#9aa3b0">Drag Field Here</div>
<div class="a" style="left:294.6px;top:245.5px;width:27.4px;height:27.4px;border-radius:50%;background:#fa3f3f;color:#fff;font-size:21px;line-height:27.4px;text-align:center"></div>
<svg style="left:0;top:0" width="400" height="300"><path d="M305.2 256.6 L309.7 252.6 V266.7" fill="none" stroke="#fff" stroke-width="2.2" stroke-linejoin="round"/></svg>
<div class="a" style="left:287.6px;top:546.7px;width:27.4px;height:27.4px;border-radius:50%;background:#fa3f3f;color:#fff;font-size:21px;line-height:27.4px;text-align:center">3</div>
<div class="a" style="left:944.8px;top:143.7px;width:27.4px;height:27.4px;border-radius:50%;background:#fa3f3f;color:#fff;font-size:21px;line-height:27.4px;text-align:center">2</div>
</div></div></body></html>
